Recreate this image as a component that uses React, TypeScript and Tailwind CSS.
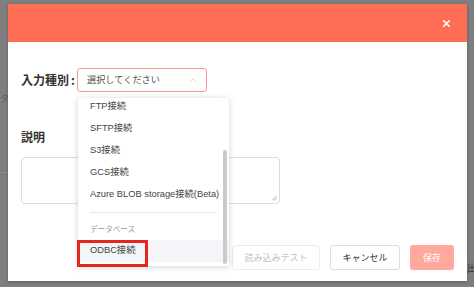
import { ChevronUp, X } from 'lucide-react'

const jp = { fontFamily: '"Noto Sans CJK JP", "Noto Sans", sans-serif' }
const mixed = { fontFamily: '"Liberation Sans", "Noto Sans CJK JP", sans-serif' }

const options = ['FTP接続', 'SFTP接続', 'S3接続', 'GCS接続', 'Azure BLOB storage接続(Beta)']

export default function App() {
  return (
    <div style={jp} className="relative w-[474px] h-[287px] overflow-hidden bg-[#7e7e7e]">
      {/* Page behind the overlay */}
      <div className="absolute left-0 top-[100px] w-[8px] h-px bg-[#8a8a8a]" />
      <div className="absolute left-0 top-[172px] w-[8px] h-px bg-[#8a8a8a]" />
      <div className="absolute left-0 top-[92px] text-[9px] text-[#5a5a5a]">タ</div>
      <div className="absolute left-[467px] top-[263px] text-[10px] text-[#3a3a3a] leading-none">出</div>

      {/* Dialog */}
      <div className="absolute left-[8px] top-[4px] w-[459px] h-[277px] bg-white flex flex-col shadow-[0_1px_3px_rgba(0,0,0,0.25)]">
        <div className="h-[38px] bg-[#ff6d55] flex items-center justify-end pr-[15px] shrink-0">
          <X className="w-[11px] h-[11px] text-white" strokeWidth={3.5} />
        </div>

        <div className="flex-1 flex flex-col px-[13px]">
          {/* 入力種別 */}
          <div className="flex items-center mt-[26px]">
            <span className="text-[12px] font-bold text-[#333] w-[56px] whitespace-nowrap">
              入力種別<span className="ml-[2px]">:</span>
            </span>
            <div className="w-[130px] h-[24px] border border-[#f19a90] rounded-[3px] flex items-center justify-between pl-[9px] pr-[8px]">
              <span className="text-[9.2px] text-[#555]">選択してください</span>
              <ChevronUp className="w-[10px] h-[10px] text-[#cfcfcf]" strokeWidth={2} />
            </div>
          </div>

          {/* 説明 */}
          <div className="mt-[39px] text-[12px] font-bold text-[#333] leading-none">説明</div>
          <div className="relative mt-[14px] w-[259px] h-[47px] border border-[#dcdcdc] rounded-[4px]">
            <svg className="absolute right-[2px] bottom-[2px]" width="6" height="6" viewBox="0 0 6 6">
              <path d="M1 5.5L5.5 1M3.5 5.5L5.5 3.5" stroke="#999" strokeWidth="0.8" />
            </svg>
          </div>

          {/* Footer */}
          <div className="flex justify-end gap-[10px] mt-auto mb-[11px] text-[9px]">
            <div className="w-[88px] h-[25px] border border-[#ececec] rounded-[3px] flex items-center justify-center text-[#c2c2c2]">
              読み込みテスト
            </div>
            <div className="w-[70px] h-[25px] border border-[#dedede] rounded-[3px] flex items-center justify-center text-[#333]">
              キャンセル
            </div>
            <div className="w-[44px] h-[25px] bg-[#ffa99d] rounded-[3px] flex items-center justify-center text-white">
              保存
            </div>
          </div>
        </div>

        {/* Dropdown menu */}
        <div
          style={mixed}
          className="absolute left-[70px] top-[94px] w-[151px] h-[168px] bg-white rounded-[3px] shadow-[0_1px_6px_rgba(0,0,0,0.18)] overflow-hidden"
        >
          <div className="-mt-[2px] flex flex-col">
            {options.map((o) => (
              <div key={o} className="h-[22px] flex items-center pl-[12px] text-[9.3px] text-[#444] whitespace-nowrap">
                {o}
              </div>
            ))}
            <div className="mx-[12px] mt-[6px] h-px bg-[#e6e6e6]" />
            <div style={jp} className="h-[22px] mt-[5px] flex items-center pl-[12px] text-[7.6px] text-[#999]">
              データベース
            </div>
            <div className="h-[22px] flex items-center pl-[12px] text-[9.3px] text-[#444] bg-[#f3f5f8]">ODBC接続</div>
          </div>
          <div className="absolute right-[2px] top-[52px] w-[4px] h-[114px] rounded-full bg-[#cacaca]" />
        </div>

        {/* Highlight box */}
        <div className="absolute left-[69px] top-[236px] w-[71px] h-[27px] border-[3px] border-[#e5261c]" />
      </div>
    </div>
  )
}
